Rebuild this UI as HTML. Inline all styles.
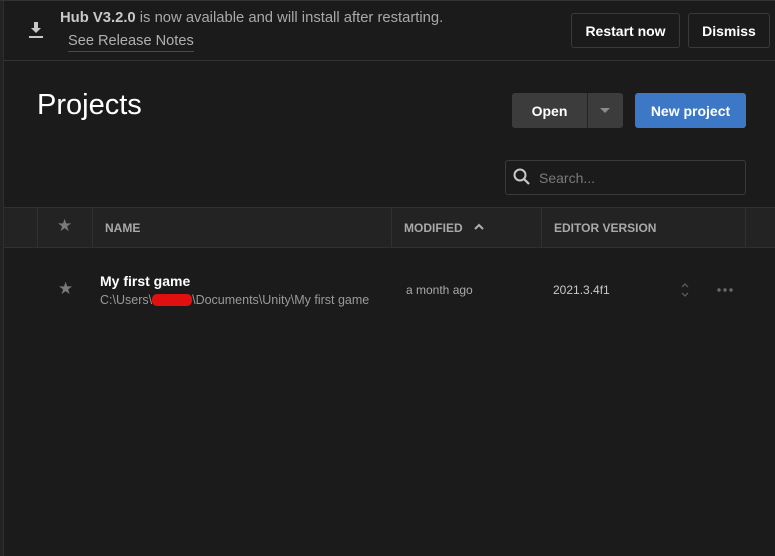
<!DOCTYPE html>
<html><head><meta charset="utf-8"><style>
*{box-sizing:border-box;margin:0;padding:0}
body{width:775px;height:556px;background:#1b1b1b;font-family:"Liberation Sans",sans-serif;position:relative;overflow:hidden;color:#c4c4c4}
.abs{position:absolute}
.leftstrip{left:0;top:0;width:4px;height:556px;background:#232323;border-right:1px solid #2e2e2e}
.topline{left:0;top:0;width:775px;height:1px;background:#333}
.bar{left:4px;top:60px;width:771px;height:1px;background:#333}
.btn{border:1px solid #3a3a3a;border-radius:3px;color:#fff;font-weight:bold;font-size:14px;display:flex;align-items:center;justify-content:center;background:#1b1b1b}
.th{font-size:12px;font-weight:bold;color:#a9a9a9;top:221px}
</style></head><body>
<div class="abs leftstrip"></div>
<div class="abs topline"></div>
<svg class="abs" style="left:28px;top:21px" width="16" height="18" viewBox="0 0 16 18"><path d="M6 1h4v6h3l-5 5-5-5h3z" fill="#c8c8c8"/><rect x="1" y="15" width="14" height="2" fill="#c8c8c8"/></svg>
<div class="abs" style="left:60px;top:10px;font-size:14.8px;color:#a9a9a9"><b style="color:#c8c8c8">Hub V3.2.0</b> is now available and will install after restarting.</div>
<div class="abs" style="left:68px;top:33px;font-size:14.6px;color:#b0b0b0;padding-bottom:2px;border-bottom:1px solid #4a4a4a">See Release Notes</div>
<div class="abs btn" style="left:571px;top:13px;width:109px;height:35px">Restart now</div>
<div class="abs btn" style="left:688px;top:13px;width:82px;height:35px">Dismiss</div>
<div class="abs bar"></div>
<div class="abs" style="left:37px;top:89px;font-size:29px;color:#fff">Projects</div>
<div class="abs btn" style="left:512px;top:93px;width:75px;height:35px;background:#3c3c3c;border-color:#3c3c3c;border-radius:3px 0 0 3px">Open</div>
<div class="abs" style="left:587px;top:93px;width:36px;height:35px;background:#3c3c3c;border-left:1px solid #242424;border-radius:0 3px 3px 0"><div class="abs" style="left:12px;top:15px;border-left:5px solid transparent;border-right:5px solid transparent;border-top:5px solid #8a8a8a"></div></div>
<div class="abs btn" style="left:635px;top:93px;width:111px;height:35px;background:#3c78c5;border-color:#3c78c5">New project</div>
<div class="abs" style="left:505px;top:160px;width:241px;height:35px;border:1px solid #3a3a3a;border-radius:3px"></div>
<svg class="abs" style="left:513px;top:168px" width="18" height="18" viewBox="0 0 18 18"><circle cx="7" cy="7" r="5.5" stroke="#c8c8c8" stroke-width="2" fill="none"/><path d="M11 11l5 5" stroke="#c8c8c8" stroke-width="2.2"/></svg>
<div class="abs" style="left:539px;top:170px;font-size:14px;color:#7a7a7a">Search...</div>
<div class="abs" style="left:4px;top:207px;width:771px;height:41px;background:#232323;border-top:1px solid #303030;border-bottom:1px solid #303030"></div>
<div class="abs" style="left:37px;top:207px;width:1px;height:41px;background:#303030"></div>
<div class="abs" style="left:92px;top:207px;width:1px;height:41px;background:#303030"></div>
<div class="abs" style="left:391px;top:207px;width:1px;height:41px;background:#303030"></div>
<div class="abs" style="left:541px;top:207px;width:1px;height:41px;background:#303030"></div>
<div class="abs" style="left:745px;top:207px;width:1px;height:41px;background:#303030"></div>
<div class="abs" style="left:57px;top:216px;font-size:17px;color:#7a7a7a">★</div>
<div class="abs th" style="left:105px">NAME</div>
<div class="abs th" style="left:404px">MODIFIED</div>
<svg class="abs" style="left:473px;top:222px" width="12" height="10"><path d="M2 7l4-4 4 4" stroke="#b0b0b0" stroke-width="2" fill="none"/></svg>
<div class="abs th" style="left:554px">EDITOR VERSION</div>
<div class="abs" style="left:58px;top:279px;font-size:17px;color:#7a7a7a">★</div>
<div class="abs" style="left:100px;top:273px;font-size:14px;font-weight:bold;color:#fff">My first game</div>
<div class="abs" style="left:100px;top:293px;font-size:12.5px;color:#9a9a9a">C:\Users\<span style="display:inline-block;width:40px;height:12px;background:#e01010;border-radius:5px;vertical-align:-2px"></span>\Documents\Unity\My first game</div>
<div class="abs" style="left:406px;top:283px;font-size:12px;color:#a9a9a9">a month ago</div>
<div class="abs" style="left:553px;top:283px;font-size:12px;color:#c8c8c8">2021.3.4f1</div>
<svg class="abs" style="left:680px;top:282px" width="10" height="16"><path d="M2 5l3-3 3 3M2 11l3 3 3-3" stroke="#5a5a5a" stroke-width="1.3" fill="none"/></svg>
<svg class="abs" style="left:716px;top:287px" width="18" height="6"><circle cx="3" cy="3" r="1.7" fill="#6a6a6a"/><circle cx="9" cy="3" r="1.7" fill="#6a6a6a"/><circle cx="15" cy="3" r="1.7" fill="#6a6a6a"/></svg>
</body></html>
